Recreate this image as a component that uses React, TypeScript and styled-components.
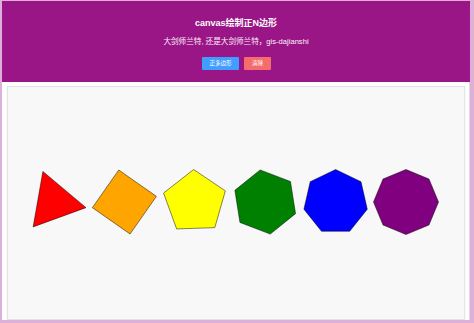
import React from 'react'
import styled, { createGlobalStyle } from 'styled-components'

const GlobalStyle = createGlobalStyle`
  html, body {
    margin: 0;
    padding: 0;
    background: #fff;
  }
  body {
    font-family: "Liberation Sans", "Noto Sans CJK SC", sans-serif;
  }
`

type Shape = {
  sides: number
  color: string
  start: number
}

const shapes: Shape[] = [
  { sides: 3, color: '#ff0000', start: -110 },
  { sides: 4, color: '#ffa500', start: -100 },
  { sides: 5, color: '#ffff00', start: -92 },
  { sides: 6, color: '#008000', start: -99 },
  { sides: 7, color: '#0000ff', start: -90 },
  { sides: 8, color: '#800080', start: -90 },
]

const points = (cx: number, cy: number, r: number, sides: number, start: number) => {
  const out: string[] = []
  for (let i = 0; i < sides; i++) {
    const a = ((start + (360 / sides) * i) * Math.PI) / 180
    out.push(`${(cx + r * Math.cos(a)).toFixed(2)},${(cy + r * Math.sin(a)).toFixed(2)}`)
  }
  return out.join(' ')
}

export default function App() {
  return (
    <Page>
      <GlobalStyle />
      <Header>
        <Title>canvas绘制正N边形</Title>
        <Subtitle>大剑师兰特, 还是大剑师兰特，gis-dajianshi</Subtitle>
        <Buttons>
          <Button kind="primary">正多边形</Button>
          <Button kind="danger">清除</Button>
        </Buttons>
      </Header>
      <Main>
        <CanvasBox>
          <svg width="454" height="228" viewBox="0 0 454 228">
            {shapes.map((s, i) => (
              <polygon
                key={s.sides}
                points={points(46 + i * 70.4, 115, 32.5, s.sides, s.start)}
                fill={s.color}
                stroke="rgba(0,0,0,0.6)"
                strokeWidth={0.8}
              />
            ))}
          </svg>
        </CanvasBox>
      </Main>
    </Page>
  )
}

const Page = styled.div`
  width: 474px;
  height: 323px;
  box-sizing: border-box;
  border: 2px solid #dcb0d9;
  border-top-width: 1px;
  border-right-width: 4px;
  border-bottom-width: 3px;
  display: flex;
  flex-direction: column;
  overflow: hidden;
`

const Header = styled.header`
  height: 81px;
  flex-shrink: 0;
  background: #9a1586;
  color: #fff;
  display: flex;
  flex-direction: column;
  align-items: center;
  padding-top: 16px;
  box-sizing: border-box;
`

const Title = styled.div`
  font-size: 9px;
  font-weight: bold;
  line-height: 12px;
  margin-bottom: 8px;
`

const Subtitle = styled.div`
  font-size: 7.6px;
  line-height: 10px;
  margin-bottom: 10px;
  color: #fbf2f9;
`

const Buttons = styled.div`
  display: flex;
  gap: 5px;
  margin-left: 1px;
`

const Button = styled.button<{ kind: 'primary' | 'danger' }>`
  height: 13px;
  padding: 0 7px;
  border: none;
  border-radius: 1px;
  font-family: "Liberation Sans", "Noto Sans CJK SC", sans-serif;
  font-size: 5.5px;
  line-height: 13px;
  color: #fff;
  background: ${p => (p.kind === 'primary' ? '#409eff' : '#f56c6c')};
  min-width: ${p => (p.kind === 'primary' ? '37px' : '27px')};
`

const Main = styled.main`
  flex: 1;
  padding: 4px 4px 4px 5px;
  display: flex;
  background: #fff;
  border-right: 1px solid #ead3e8;
`

const CanvasBox = styled.div`
  flex: 1;
  background: #f8f8f8;
  border: 1px solid #e4e4e4;
  box-shadow: 0 1px 2px rgba(0, 0, 0, 0.08);
  overflow: hidden;
`
